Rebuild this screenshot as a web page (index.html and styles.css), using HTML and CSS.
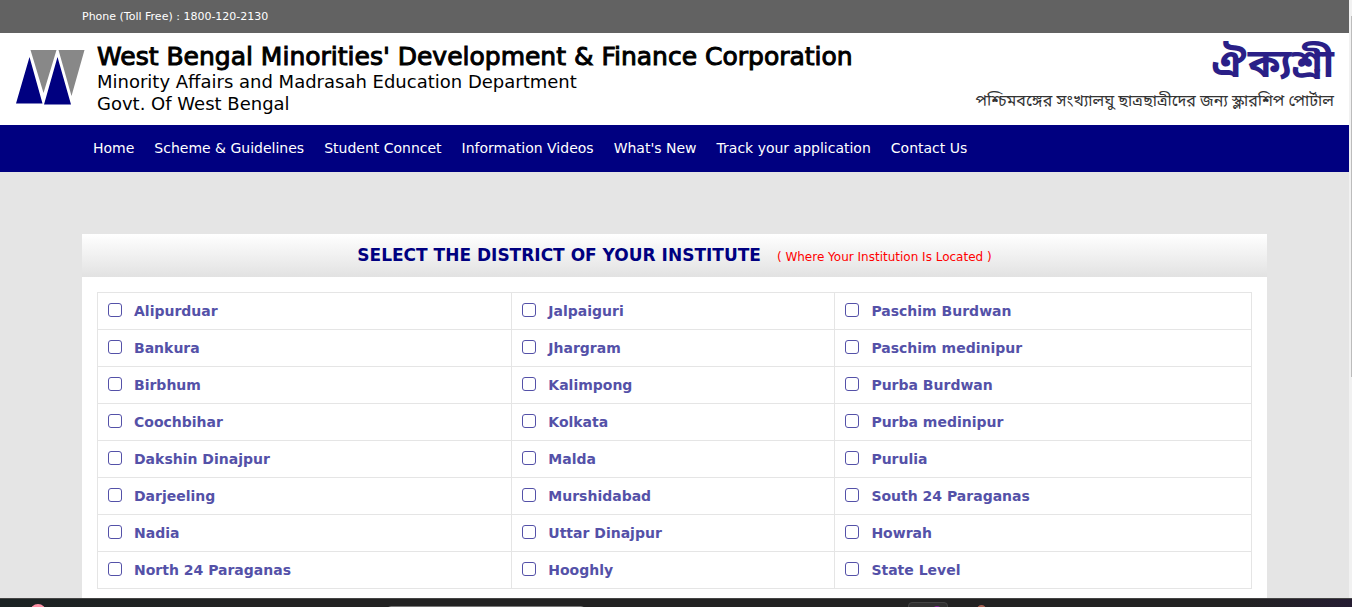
FILE: index.html
```html
<!DOCTYPE html>
<html lang="en">
<head>
  <meta charset="UTF-8">
  <meta name="viewport" content="width=device-width, initial-scale=1">
  <title>West Bengal Minorities' Development &amp; Finance Corporation</title>
  <link rel="stylesheet" href="styles.css">
</head>
<body>
  <div class="screen">
    <div class="page">
      <div class="topbar">
        <div class="container">Phone (Toll Free) : 1800-120-2130</div>
      </div>

      <header class="header">
        <svg class="logo" viewBox="0 0 70 56" aria-hidden="true">
          <path fill="#888" d="M15.500 1H41.500L28.500 44ZM43.500 1H69.500L56.500 47Z"/>
          <path fill="#000080" d="M14.500 8L27.500 54.500H1ZM42.500 8L56 55.500H29Z"/>
        </svg>
        <div class="brand">
          <h1>West Bengal Minorities' Development &amp; Finance Corporation</h1>
          <p>Minority Affairs and Madrasah Education Department</p>
          <p>Govt. Of West Bengal</p>
        </div>
        <div class="portal" lang="bn">
          <div class="portal-name">ঐক্যশ্রী</div>
          <div class="portal-text">পশ্চিমবঙ্গের সংখ্যালঘু ছাত্রছাত্রীদের জন্য স্কলারশিপ পোর্টাল</div>
        </div>
      </header>

      <nav class="navbar">
        <div class="container nav-links">
          <a href="#">Home</a>
          <a href="#">Scheme &amp; Guidelines</a>
          <a href="#">Student Conncet</a>
          <a href="#">Information Videos</a>
          <a href="#">What's New</a>
          <a href="#">Track your application</a>
          <a href="#">Contact Us</a>
        </div>
      </nav>

      <main class="container panel">
        <div class="panel-head">
          <h2>SELECT THE DISTRICT OF YOUR INSTITUTE</h2>
          <span class="note">( Where Your Institution Is Located )</span>
        </div>
        <div class="panel-body">
          <table class="districts">
            <colgroup><col class="col-side"><col class="col-mid"><col></colgroup>
            <tr>
              <td><label><input type="checkbox">Alipurduar</label></td>
              <td><label><input type="checkbox">Jalpaiguri</label></td>
              <td><label><input type="checkbox">Paschim Burdwan</label></td>
            </tr>
            <tr>
              <td><label><input type="checkbox">Bankura</label></td>
              <td><label><input type="checkbox">Jhargram</label></td>
              <td><label><input type="checkbox">Paschim medinipur</label></td>
            </tr>
            <tr>
              <td><label><input type="checkbox">Birbhum</label></td>
              <td><label><input type="checkbox">Kalimpong</label></td>
              <td><label><input type="checkbox">Purba Burdwan</label></td>
            </tr>
            <tr>
              <td><label><input type="checkbox">Coochbihar</label></td>
              <td><label><input type="checkbox">Kolkata</label></td>
              <td><label><input type="checkbox">Purba medinipur</label></td>
            </tr>
            <tr>
              <td><label><input type="checkbox">Dakshin Dinajpur</label></td>
              <td><label><input type="checkbox">Malda</label></td>
              <td><label><input type="checkbox">Purulia</label></td>
            </tr>
            <tr>
              <td><label><input type="checkbox">Darjeeling</label></td>
              <td><label><input type="checkbox">Murshidabad</label></td>
              <td><label><input type="checkbox">South 24 Paraganas</label></td>
            </tr>
            <tr>
              <td><label><input type="checkbox">Nadia</label></td>
              <td><label><input type="checkbox">Uttar Dinajpur</label></td>
              <td><label><input type="checkbox">Howrah</label></td>
            </tr>
            <tr>
              <td><label><input type="checkbox">North 24 Paraganas</label></td>
              <td><label><input type="checkbox">Hooghly</label></td>
              <td><label><input type="checkbox">State Level</label></td>
            </tr>
          </table>
        </div>
      </main>
    </div>
    <div class="scrollbar"><div class="thumb"></div></div>
  </div>

  <div class="taskbar">
    <span class="task-dot"></span>
    <span class="task-search"></span>
    <span class="task-app"><i class="app-purple"></i></span>
    <span class="task-orange"></span>
  </div>
</body>
</html>
```
FILE: styles.css
```css
* {
  box-sizing: border-box;
}
body {
  margin: 0;
  height: 100vh;
  display: flex;
  flex-direction: column;
  overflow: hidden;
  font-family: Verdana, "DejaVu Sans", sans-serif;
  background: #e5e5e5;
}
h1, h2, p {
  margin: 0;
}
.screen {
  flex: 1;
  min-height: 0;
  display: flex;
}
.page {
  flex: 1;
  overflow: hidden;
}
.container {
  width: calc(100% - 164px);
  margin: 0 auto;
}

/* top strip */
.topbar {
  background: #626262;
  color: #fff;
  font-size: 11px;
  line-height: 33px;
}

/* header */
.header {
  display: flex;
  align-items: flex-start;
  background: #fff;
  padding: 10px 15px;
  color: #000;
}
.logo {
  width: 70px;
  height: 56px;
  margin-top: 6px;
}
.brand {
  flex: 1;
  padding-left: 12px;
}
.brand h1 {
  font-size: 25px;
  line-height: 28px;
  font-weight: normal;
  -webkit-text-stroke: 1px #000;
}
.brand p {
  font-size: 18px;
  line-height: 22px;
}
.portal {
  font-family: "Noto Sans Bengali", "Nirmala UI", "Noto Sans", sans-serif;
  text-align: right;
  white-space: nowrap;
}
.portal-name {
  color: #2a1f87;
  font-size: 40px;
  font-weight: bold;
  line-height: 48px;
}
.portal-text {
  color: #333;
  font-size: 16px;
  line-height: 22px;
}

/* menu */
.navbar {
  background: #000080;
}
.nav-links {
  display: flex;
  gap: 20px;
  padding-left: 11px;
}
.nav-links a {
  color: #fff;
  font-size: 14px;
  line-height: 47px;
  text-decoration: none;
}

/* district panel */
.panel {
  margin-top: 62px;
  background: #fff;
}
.panel-head {
  display: flex;
  justify-content: center;
  align-items: baseline;
  gap: 16px;
  background: linear-gradient(#fff, #e2e2e2);
}
.panel-head h2 {
  color: #000080;
  font-size: 17px;
  line-height: 43px;
}
.note {
  color: #f00;
  font-size: 12px;
  line-height: 20px;
}
.panel-body {
  padding: 15px 15px 25px;
}
.districts {
  width: 100%;
  table-layout: fixed;
  border-collapse: collapse;
}
.col-side {
  width: 35.9%;
}
.col-mid {
  width: 28%;
}
.districts td {
  height: 37px;
  padding: 0 10px;
  border: 1px solid #e5e5e5;
}
.districts label {
  display: flex;
  align-items: center;
  gap: 12px;
  color: #5451a8;
  font-size: 14px;
  font-weight: bold;
}
.districts input {
  appearance: none;
  width: 14px;
  height: 14px;
  margin: 0 0 2px;
  border: 1px solid #5451a8;
  border-radius: 3px;
}
.districts input:checked {
  background: #5451a8;
}

/* scrollbar */
.scrollbar {
  width: 3px;
  padding: 16px 0 0 2px;
  background: #f1f1f1;
}
.thumb {
  height: 62%;
  background: #bcbcbc;
}

/* taskbar */
.taskbar {
  position: relative;
  height: 9px;
  overflow: hidden;
  border-top: 1px solid #454545;
  background: linear-gradient(90deg, #1b2223, #222 18%, #222 92%, #251c32);
}
.taskbar span {
  position: absolute;
}
.task-dot {
  left: 30px;
  top: 5px;
  width: 16px;
  height: 16px;
  border-radius: 50%;
  background: #ff91a5;
}
.task-search {
  left: 387px;
  top: 7px;
  width: 198px;
  height: 20px;
  border: 1px solid #777;
  border-radius: 4px;
}
.task-app {
  left: 908px;
  top: 3px;
  width: 40px;
  height: 30px;
  border: 1px solid #444;
  border-radius: 4px;
  background: #303030;
}
.app-purple {
  display: block;
  width: 10px;
  height: 10px;
  margin: 3px 0 0 23px;
  border-radius: 50%;
  background: #87209b;
}
.task-orange {
  left: 977px;
  top: 6px;
  width: 9px;
  height: 9px;
  border-radius: 50%;
  background: #a55f50;
}
```
